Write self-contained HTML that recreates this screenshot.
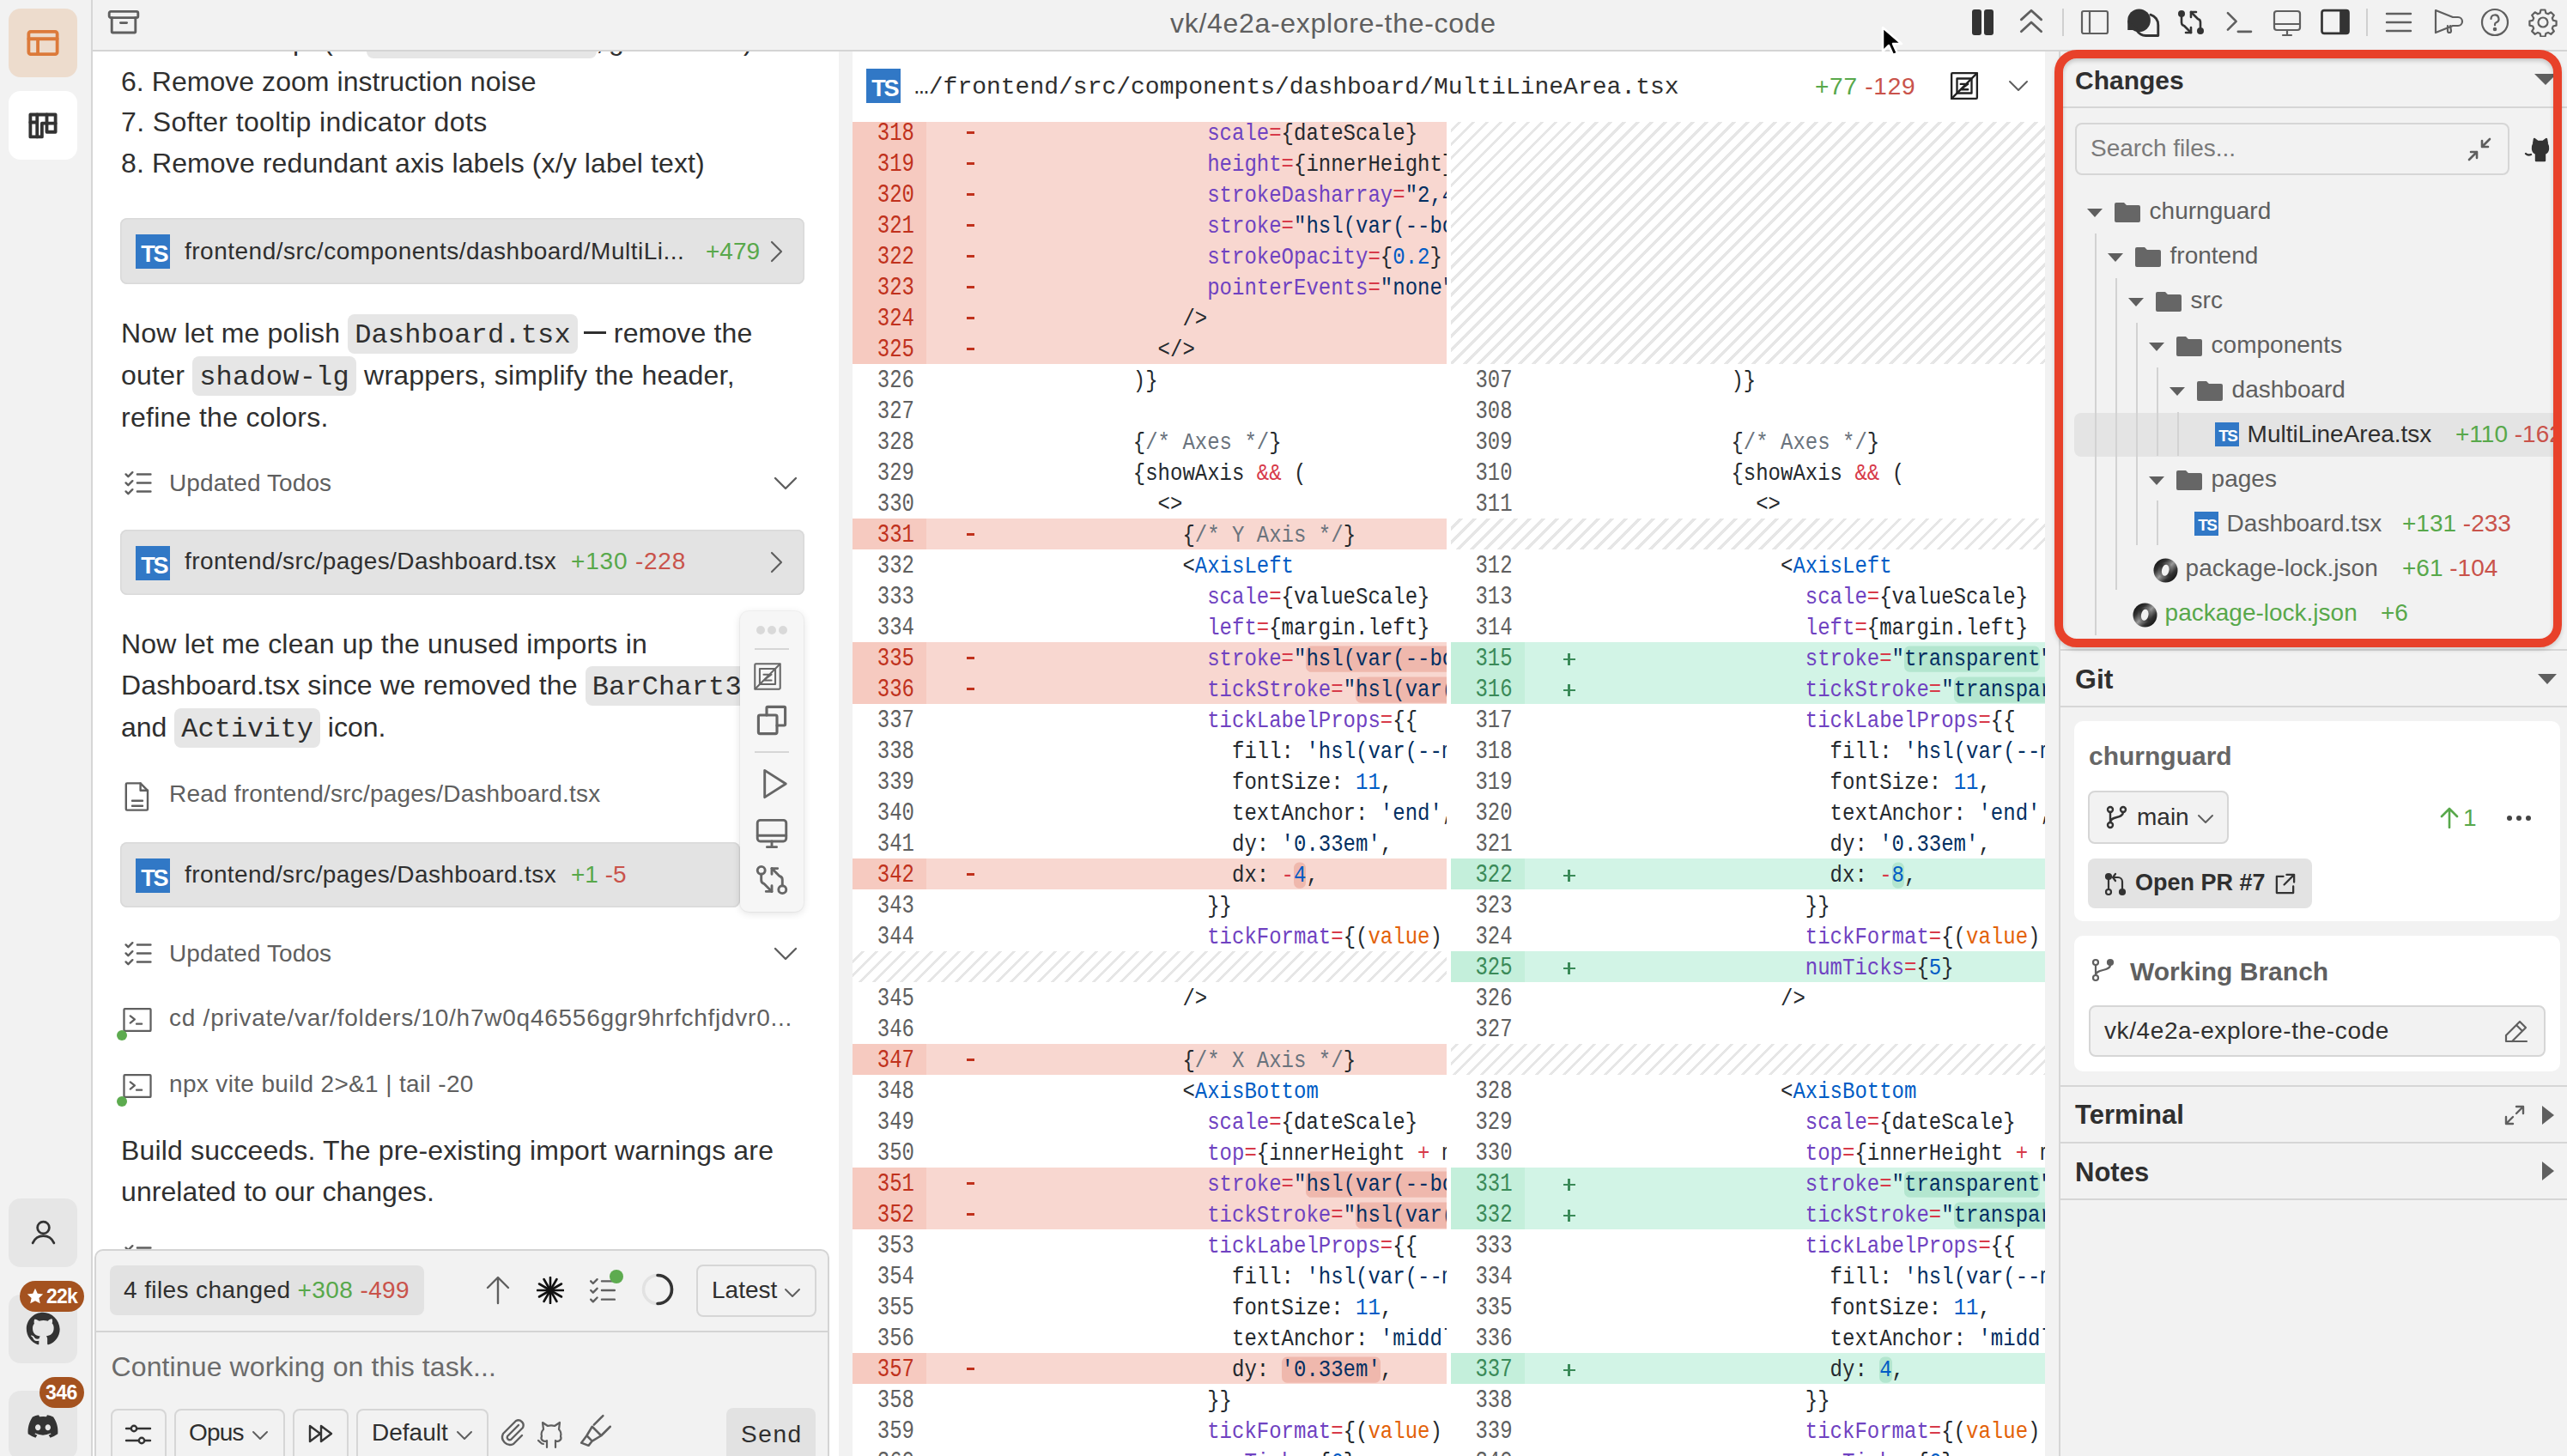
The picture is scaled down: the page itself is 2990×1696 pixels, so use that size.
<!DOCTYPE html>
<html><head><meta charset="utf-8">
<style>
html,body{margin:0;padding:0;}
body{width:2990px;height:1696px;overflow:hidden;position:relative;background:#f2f2f2;font-family:'Liberation Sans',sans-serif;}
.a{position:absolute;}
.t{white-space:pre;line-height:1;}
.s{font-family:'Liberation Sans',sans-serif;}
.m{font-family:'Liberation Mono',monospace;}
.ts{background:#3178c6;color:#fff;font-weight:700;text-align:center;font-family:'Liberation Sans',sans-serif;letter-spacing:-1px;line-height:1 !important;}
.code{font-family:'Liberation Mono',monospace;background:#e6e6e6;border-radius:8px;padding:6px 8px 3px 8px;}
.row{position:absolute;height:36px;overflow:hidden;}
.ln{position:absolute;top:0;height:36px;width:86px;}
.num{position:absolute;right:14px;top:9.4px;transform:scaleY(1.21);transform-origin:0 18.24px;font-family:'Liberation Mono',monospace;font-size:24px;line-height:24px;color:#5f5f5f;white-space:pre;}
.sg{position:absolute;top:9.1px;font-family:'Liberation Mono',monospace;font-size:24px;line-height:24px;white-space:pre;}
.cd{position:absolute;top:9.1px;transform:scaleY(1.12);transform-origin:0 18.24px;font-family:'Liberation Mono',monospace;font-size:24px;line-height:24px;white-space:pre;color:#24292e;}
.del{background:#f8d7d0;}
.del .ln{background:#f6cac0;}
.del .num,.del .sg{color:#c0311c;}
.add{background:#d2f4e6;}
.add .ln{background:#c4efdb;}
.add .num,.add .sg{color:#3a8a58;}
.hatch{background:repeating-linear-gradient(135deg,#e6e6e6 0 3px,#ffffff 3px 11.31px);background-attachment:fixed;}
.ka{color:#6f42c1}.ko{color:#d73a49}.ks{color:#032f62}.kn{color:#005cc5}.kt{color:#005cc5}.kc{color:#6a737d}.kv{color:#e36209}.kp{color:#24292e}
.hd{background:#efb8ad;border-radius:6px;}
.ha{background:#b3e6cf;border-radius:6px;}
</style></head><body>

<div class="a" style="left:106px;top:0px;width:2px;height:1696px;background:#d6d6d6;"></div>
<div class="a" style="left:10px;top:10px;width:80px;height:80px;background:#eddccd;border-radius:14px;"></div>
<svg class="a" style="left:31px;top:34px;" width="38" height="32" viewBox="0 0 32 26" fill="none" stroke="#dc7a3a" stroke-width="3.2" stroke-linecap="round" stroke-linejoin="round"><rect x="2" y="2" width="28" height="22" rx="2"/><path d="M2 9h28M11 9v15"/></svg>
<div class="a" style="left:10px;top:106px;width:80px;height:80px;background:#ffffff;border-radius:14px;"></div>
<svg class="a" style="left:32px;top:130px;" width="36" height="34" viewBox="0 0 32 30" fill="none" stroke="#333" stroke-width="3.4" stroke-linecap="round" stroke-linejoin="round"><path d="M3 3h26v18h-9v-9h-5v14H3z" /><path d="M10 3v23M20 3v9M3 11h7M20 12h9"/></svg>
<div class="a" style="left:10px;top:1396px;width:80px;height:80px;background:#e6e6e6;border-radius:14px;"></div>
<svg class="a" style="left:34px;top:1419px;" width="33" height="33" viewBox="0 0 24 24" fill="none" stroke="#333" stroke-width="2" stroke-linecap="round" stroke-linejoin="round"><circle cx="12" cy="8" r="5"/><path d="M3 21c1.8-4 5-6 9-6s7.2 2 9 6"/></svg>
<div class="a" style="left:10px;top:1508px;width:80px;height:80px;background:#e6e6e6;border-radius:14px;"></div>
<svg class="a" style="left:30px;top:1528px;" width="40" height="40" viewBox="0 0 24 24" fill="#333" stroke="none" stroke-width="0" stroke-linecap="round" stroke-linejoin="round"><path d="M12 .5C5.7.5.5 5.7.5 12c0 5.1 3.3 9.4 7.9 10.9.6.1.8-.2.8-.6v-2c-3.2.7-3.9-1.4-3.9-1.4-.5-1.3-1.3-1.7-1.3-1.7-1-.7.1-.7.1-.7 1.2.1 1.8 1.2 1.8 1.2 1 1.8 2.8 1.3 3.5 1 .1-.8.4-1.3.7-1.6-2.6-.3-5.3-1.3-5.3-5.7 0-1.3.5-2.3 1.2-3.1-.1-.3-.5-1.5.1-3.1 0 0 1-.3 3.3 1.2a11.5 11.5 0 0 1 6 0C17.3 4.7 18.3 5 18.3 5c.7 1.6.2 2.8.1 3.1.8.8 1.2 1.9 1.2 3.1 0 4.4-2.7 5.4-5.3 5.7.4.4.8 1.1.8 2.2v3.3c0 .3.2.7.8.6 4.6-1.5 7.9-5.8 7.9-10.9C23.5 5.7 18.3.5 12 .5z"/></svg>
<div class="a" style="left:23px;top:1492px;width:75px;height:36px;border-radius:18px;background:#a4521f;"></div>
<svg class="a" style="left:30px;top:1499px;" width="22" height="22" viewBox="0 0 24 24" fill="#fff" stroke="none" stroke-width="0" stroke-linecap="round" stroke-linejoin="round"><path d="M12 2l3 6.5 7 .8-5.2 4.8 1.5 7L12 17.6 5.7 21.1l1.5-7L2 9.3l7-.8z"/></svg>
<div class="a t s" style="left:54px;top:1499.45px;font-size:23px;color:#ffffff;font-weight:700;letter-spacing:-0.8px;">22k</div>
<div class="a" style="left:10px;top:1620px;width:80px;height:80px;background:#e6e6e6;border-radius:14px;"></div>
<div class="a" style="left:46px;top:1604px;width:52px;height:36px;border-radius:18px;background:#a4521f;"></div>
<div class="a t s" style="left:53px;top:1611.45px;font-size:23px;color:#ffffff;font-weight:700;letter-spacing:-0.6px;">346</div>
<svg class="a" style="left:30px;top:1644px;" width="40" height="32" viewBox="0 0 24 22" fill="#333" stroke="none" stroke-width="0" stroke-linecap="round" stroke-linejoin="round"><path d="M20.3 4.4A19.8 19.8 0 0 0 15.4 3l-.6 1.3a18.3 18.3 0 0 0-5.5 0L8.6 3a19.7 19.7 0 0 0-4.9 1.5C.6 9.1-.3 13.6.1 18.1a20 20 0 0 0 6 3l1.3-2.1c-.7-.3-1.4-.6-2-1l.5-.4a14.1 14.1 0 0 0 12.2 0l.5.4c-.6.4-1.3.7-2 1l1.3 2.1a19.9 19.9 0 0 0 6-3c.5-5.2-.9-9.7-3.6-13.7zM8 15.3c-1.2 0-2.2-1.1-2.2-2.4S6.8 10.5 8 10.5s2.2 1.1 2.2 2.4-1 2.4-2.2 2.4zm8 0c-1.2 0-2.2-1.1-2.2-2.4s1-2.4 2.2-2.4 2.2 1.1 2.2 2.4-1 2.4-2.2 2.4z"/></svg>
<div class="a" style="left:108px;top:58px;width:2882px;height:2px;background:#d4d4d4;"></div>
<svg class="a" style="left:124px;top:11px;" width="40" height="30" viewBox="0 0 32 25" fill="none" stroke="#5f5f5f" stroke-width="2.4" stroke-linecap="round" stroke-linejoin="round"><rect x="2" y="2" width="28" height="6" rx="1.5"/><path d="M4.5 8v13.5a1 1 0 0 0 1 1h21a1 1 0 0 0 1-1V8M13 13h6"/></svg>
<div class="a t s" style="left:1363px;top:10.80px;font-size:32px;color:#5f5f5f;letter-spacing:0.7px;">vk/4e2a-explore-the-code</div>
<div class="a" style="left:2297px;top:11px;width:11px;height:30px;background:#333;border-radius:3px;"></div>
<div class="a" style="left:2311px;top:11px;width:11px;height:30px;background:#333;border-radius:3px;"></div>
<svg class="a" style="left:2349px;top:9px;" width="34" height="32" viewBox="0 0 32 30" fill="none" stroke="#5f5f5f" stroke-width="2.6" stroke-linecap="round" stroke-linejoin="round"><path d="M5 13l11-10 11 10M5 26l11-10 11 10"/></svg>
<div class="a" style="left:2402px;top:10px;width:2px;height:32px;background:#d0d0d0;"></div>
<svg class="a" style="left:2422px;top:10px;" width="36" height="32" viewBox="0 0 34 32" fill="none" stroke="#5f5f5f" stroke-width="2.2" stroke-linecap="round" stroke-linejoin="round"><rect x="2" y="3" width="30" height="26" rx="2"/><path d="M11 3v26"/></svg>
<svg class="a" style="left:2476px;top:8px;" width="40" height="36" viewBox="0 0 36 32" fill="none" stroke="#333" stroke-width="2.6" stroke-linecap="round" stroke-linejoin="round"><circle cx="14" cy="14" r="12" fill="#333" stroke="none"/><path d="M2 14v10h12" fill="#333" stroke="none"/><path d="M12 25a11 11 0 0 0 9 5h13V19a11 11 0 0 0-8-11" stroke="#333" sw="2.5"/></svg>
<svg class="a" style="left:2533px;top:10px;" width="38" height="32" viewBox="0 0 34 32" fill="none" stroke="#333" stroke-width="2.6" stroke-linecap="round" stroke-linejoin="round"><circle cx="6" cy="6" r="4" fill="#333" stroke="none"/><circle cx="28" cy="26" r="4" fill="#333" stroke="none"/><path d="M6 10v6a4 4 0 0 0 3 4l8 8"/><path d="M17 22v6h-6"/><path d="M28 22v-6a4 4 0 0 0-3-4L17 4"/><path d="M17 10V4h6"/></svg>
<svg class="a" style="left:2592px;top:13px;" width="34" height="26" viewBox="0 0 30 24" fill="none" stroke="#5f5f5f" stroke-width="2.4" stroke-linecap="round" stroke-linejoin="round"><path d="M2 2l9 9-9 9M13 22h14"/></svg>
<svg class="a" style="left:2646px;top:11px;" width="36" height="32" viewBox="0 0 34 32" fill="none" stroke="#5f5f5f" stroke-width="2.2" stroke-linecap="round" stroke-linejoin="round"><rect x="2" y="2" width="30" height="22" rx="3"/><path d="M2 17h30M12 30h10M17 24v6"/></svg>
<svg class="a" style="left:2702px;top:10px;" width="36" height="31" viewBox="0 0 34 30" fill="none" stroke="#333" stroke-width="2.6" stroke-linecap="round" stroke-linejoin="round"><rect x="2" y="2" width="30" height="26" rx="2.5" stroke="#333"/><path d="M22 2h8a2 2 0 0 1 2 2v22a2 2 0 0 1-2 2h-8z" fill="#333" stroke="none"/></svg>
<div class="a" style="left:2756px;top:10px;width:2px;height:32px;background:#d0d0d0;"></div>
<svg class="a" style="left:2777px;top:13px;" width="34" height="26" viewBox="0 0 32 26" fill="none" stroke="#5f5f5f" stroke-width="2.4" stroke-linecap="round" stroke-linejoin="round"><path d="M2 3h28M2 13h28M2 23h28"/></svg>
<svg class="a" style="left:2833px;top:9px;" width="38" height="34" viewBox="0 0 36 34" fill="none" stroke="#5f5f5f" stroke-width="2.2" stroke-linecap="round" stroke-linejoin="round"><path d="M3 3l20 8h6a5 5 0 0 1 0 10h-6L3 29z"/><path d="M20 21l1 6a2 2 0 0 1-4 0v-6"/></svg>
<svg class="a" style="left:2888px;top:9px;" width="36" height="34" viewBox="0 0 34 34" fill="none" stroke="#5f5f5f" stroke-width="2.2" stroke-linecap="round" stroke-linejoin="round"><circle cx="17" cy="17" r="15"/><path d="M12.5 13a4.5 4.5 0 1 1 6 4.2c-1 .4-1.5 1.2-1.5 2.3v.8"/><circle cx="17" cy="25" r="1.2" fill="#5f5f5f"/></svg>
<svg class="a" style="left:2944px;top:9px;" width="36" height="34" viewBox="0 0 34 34" fill="none" stroke="#5f5f5f" stroke-width="2.2" stroke-linecap="round" stroke-linejoin="round"><path d="M14.5 2.5h5l.9 3.7 2.6 1.1 3.3-2 3.5 3.5-2 3.3 1.1 2.6 3.7.9v5l-3.7.9-1.1 2.6 2 3.3-3.5 3.5-3.3-2-2.6 1.1-.9 3.7h-5l-.9-3.7-2.6-1.1-3.3 2-3.5-3.5 2-3.3-1.1-2.6-3.7-.9v-5l3.7-.9 1.1-2.6-2-3.3 3.5-3.5 3.3 2 2.6-1.1z"/><circle cx="17" cy="17" r="5.5"/></svg>
<div class="a" id="chat" style="left:108px;top:60px;width:869px;height:1636px;background:#fff;overflow:hidden;">
<div class="a" style="left:-108px;top:-60px;width:2990px;height:1696px;">
<div class="a" style="left:427px;top:40px;width:268px;height:28px;background:#e6e6e6;border-radius:8px;"></div>
<div class="a t s" style="left:341px;top:30.80px;font-size:32px;color:#2f2f2f;">p</div>
<div class="a t s" style="left:377px;top:30.80px;font-size:32px;color:#2f2f2f;">(</div>
<div class="a t s" style="left:694px;top:30.80px;font-size:32px;color:#2f2f2f;">,</div>
<div class="a t s" style="left:709px;top:30.80px;font-size:32px;color:#2f2f2f;">g</div>
<div class="a t s" style="left:866px;top:30.80px;font-size:32px;color:#2f2f2f;">)</div>
<div class="a t s" style="left:141px;top:78.80px;font-size:32px;color:#2f2f2f;letter-spacing:0.05px;">6. Remove zoom instruction noise</div>
<div class="a t s" style="left:141px;top:126.40px;font-size:32px;color:#2f2f2f;letter-spacing:0.38px;">7. Softer tooltip indicator dots</div>
<div class="a t s" style="left:141px;top:174.00px;font-size:32px;color:#2f2f2f;letter-spacing:0.12px;">8. Remove redundant axis labels (x/y label text)</div>
<div class="a" style="left:140px;top:254px;width:797px;height:77px;background:#e3e3e3;border-radius:8px;box-shadow:inset 0 0 0 1.5px #d9d9d9;"></div>
<div class="a" style="left:158px;top:273px;width:40px;height:40px;background:#3178c6;overflow:hidden;"><div class="a t s" style="left:6.20px;top:10.35px;font-size:27.00px;font-weight:700;color:#fff;letter-spacing:-2.20px;">TS</div></div>
<div class="a t s" style="left:215px;top:278.70px;font-size:28px;color:#2f2f2f;letter-spacing:0.45px;"></div>
<div class="a t s" style="left:215px;top:278.70px;font-size:28px;color:#2f2f2f;letter-spacing:0.5px;">frontend/src/components/dashboard/MultiLi...</div>
<div class="a t s" style="left:822px;top:278.70px;font-size:28px;color:#58a84b;">+479</div>
<svg class="a" style="left:897px;top:278px;" width="16" height="30" viewBox="0 0 16 28" fill="none" stroke="#5f5f5f" stroke-width="2.2" stroke-linecap="round" stroke-linejoin="round"><path d="M2 3l11 11L2 25"/></svg>
<div class="a t s" style="left:141px;top:371.55px;font-size:32px;color:#2f2f2f;letter-spacing:0.15px;">Now let me polish <span class="code">Dashboard.tsx</span> <span style="display:inline-block;width:26px;height:2.6px;background:#2f2f2f;vertical-align:10px;margin-left:-2px"></span> remove the</div>
<div class="a t s" style="left:141px;top:421.30px;font-size:32px;color:#2f2f2f;letter-spacing:0.22px;">outer <span class="code">shadow-lg</span> wrappers, simplify the header,</div>
<div class="a t s" style="left:141px;top:470.30px;font-size:32px;color:#2f2f2f;letter-spacing:0.28px;">refine the colors.</div>
<svg class="a" style="left:143px;top:547.5px;" width="36" height="30" viewBox="0 0 30 27" fill="none" stroke="#5f5f5f" stroke-width="2.2" stroke-linecap="round" stroke-linejoin="round"><path d="M2 4l2.5 2.5L9 2M2 13l2.5 2.5L9 11M2 22l2.5 2.5L9 20M14 4h14M14 13h14M14 22h14"/></svg>
<div class="a t s" style="left:197px;top:548.70px;font-size:28px;color:#5f5f5f;letter-spacing:0.1px;">Updated Todos</div>
<svg class="a" style="left:900px;top:552.5px;" width="30" height="20" viewBox="0 0 30 20" fill="none" stroke="#5f5f5f" stroke-width="2.4" stroke-linecap="round" stroke-linejoin="round"><path d="M3 4l12 12L27 4"/></svg>
<div class="a" style="left:140px;top:617px;width:797px;height:76px;background:#e3e3e3;border-radius:8px;box-shadow:inset 0 0 0 1.5px #d9d9d9;"></div>
<div class="a" style="left:158px;top:636px;width:40px;height:40px;background:#3178c6;overflow:hidden;"><div class="a t s" style="left:6.20px;top:10.35px;font-size:27.00px;font-weight:700;color:#fff;letter-spacing:-2.20px;">TS</div></div>
<div class="a t s" style="left:215px;top:641.70px;font-size:28px;color:#2f2f2f;letter-spacing:0.45px;"></div>
<div class="a t s" style="left:215px;top:640.20px;font-size:28px;color:#2f2f2f;letter-spacing:0.4px;">frontend/src/pages/Dashboard.tsx</div>
<div class="a t s" style="left:665px;top:640.20px;font-size:28px;color:#2f2f2f;letter-spacing:0.8px;"><span style="color:#58a84b">+130</span> <span style="color:#c9534b">-228</span></div>
<svg class="a" style="left:897px;top:640px;" width="16" height="30" viewBox="0 0 16 28" fill="none" stroke="#5f5f5f" stroke-width="2.2" stroke-linecap="round" stroke-linejoin="round"><path d="M2 3l11 11L2 25"/></svg>
<div class="a t s" style="left:141px;top:734.05px;font-size:32px;color:#2f2f2f;letter-spacing:0.2px;">Now let me clean up the unused imports in</div>
<div class="a t s" style="left:141px;top:782.30px;font-size:32px;color:#2f2f2f;letter-spacing:0.15px;">Dashboard.tsx since we removed the <span class="code">BarChart3</span></div>
<div class="a t s" style="left:141px;top:830.80px;font-size:32px;color:#2f2f2f;">and <span class="code">Activity</span> icon.</div>
<svg class="a" style="left:143px;top:910px;" width="34" height="36" viewBox="0 0 28 30" fill="none" stroke="#5f5f5f" stroke-width="2" stroke-linecap="round" stroke-linejoin="round"><path d="M4 2h13l7 7v18a1 1 0 0 1-1 1H4a1 1 0 0 1-1-1V3a1 1 0 0 1 1-1z"/><path d="M17 2v7h7M9 19h10M9 24h10"/></svg>
<div class="a t s" style="left:197px;top:911.20px;font-size:28px;color:#5f5f5f;letter-spacing:0.2px;">Read frontend/src/pages/Dashboard.tsx</div>
<div class="a" style="left:140px;top:980.5px;width:722px;height:76.5px;background:#e3e3e3;border-radius:8px;box-shadow:inset 0 0 0 1.5px #d9d9d9;"></div>
<div class="a" style="left:158px;top:999.5px;width:40px;height:40px;background:#3178c6;overflow:hidden;"><div class="a t s" style="left:6.20px;top:10.35px;font-size:27.00px;font-weight:700;color:#fff;letter-spacing:-2.20px;">TS</div></div>
<div class="a t s" style="left:215px;top:1005.20px;font-size:28px;color:#2f2f2f;letter-spacing:0.45px;"></div>
<div class="a t s" style="left:215px;top:1004.70px;font-size:28px;color:#2f2f2f;letter-spacing:0.4px;">frontend/src/pages/Dashboard.tsx</div>
<div class="a t s" style="left:665px;top:1004.70px;font-size:28px;color:#2f2f2f;"><span style="color:#58a84b">+1</span> <span style="color:#c9534b">-5</span></div>
<svg class="a" style="left:143px;top:1095.5px;" width="36" height="30" viewBox="0 0 30 27" fill="none" stroke="#5f5f5f" stroke-width="2.2" stroke-linecap="round" stroke-linejoin="round"><path d="M2 4l2.5 2.5L9 2M2 13l2.5 2.5L9 11M2 22l2.5 2.5L9 20M14 4h14M14 13h14M14 22h14"/></svg>
<div class="a t s" style="left:197px;top:1096.70px;font-size:28px;color:#5f5f5f;letter-spacing:0.1px;">Updated Todos</div>
<svg class="a" style="left:900px;top:1100.5px;" width="30" height="20" viewBox="0 0 30 20" fill="none" stroke="#5f5f5f" stroke-width="2.4" stroke-linecap="round" stroke-linejoin="round"><path d="M3 4l12 12L27 4"/></svg>
<svg class="a" style="left:142px;top:1172.5px;" width="36" height="30" viewBox="0 0 34 29" fill="none" stroke="#5f5f5f" stroke-width="2.2" stroke-linecap="round" stroke-linejoin="round"><rect x="2" y="2" width="30" height="25" rx="1"/><path d="M9 10l5 4-5 4M16 19h6"/></svg>
<div class="a" style="left:136px;top:1200.0px;width:12px;height:12px;border-radius:6px;background:#5dab4f;"></div>
<div class="a t s" style="left:197px;top:1171.70px;font-size:28px;color:#5f5f5f;letter-spacing:0.75px;">cd /private/var/folders/10/h7w0q46556ggr9hrfchfjdvr0...</div>
<svg class="a" style="left:142px;top:1249.5px;" width="36" height="30" viewBox="0 0 34 29" fill="none" stroke="#5f5f5f" stroke-width="2.2" stroke-linecap="round" stroke-linejoin="round"><rect x="2" y="2" width="30" height="25" rx="1"/><path d="M9 10l5 4-5 4M16 19h6"/></svg>
<div class="a" style="left:136px;top:1277.0px;width:12px;height:12px;border-radius:6px;background:#5dab4f;"></div>
<div class="a t s" style="left:197px;top:1248.70px;font-size:28px;color:#5f5f5f;letter-spacing:0.35px;">npx vite build 2&gt;&amp;1 | tail -20</div>
<div class="a t s" style="left:141px;top:1324.05px;font-size:32px;color:#2f2f2f;letter-spacing:0.16px;">Build succeeds. The pre-existing import warnings are</div>
<div class="a t s" style="left:141px;top:1371.55px;font-size:32px;color:#2f2f2f;letter-spacing:0.08px;">unrelated to our changes.</div>
<svg class="a" style="left:143px;top:1449px;" width="36" height="30" viewBox="0 0 30 27" fill="none" stroke="#5f5f5f" stroke-width="2.2" stroke-linecap="round" stroke-linejoin="round"><path d="M2 4l2.5 2.5L9 2M14 4h14M14 13h14"/></svg>
<div class="a" style="left:862px;top:712px;width:74px;height:350px;background:#f6f6f6;border-radius:10px;box-shadow:0 2px 10px rgba(0,0,0,0.12), 0 0 0 1px rgba(0,0,0,0.03);"></div>
<div class="a" style="left:881px;top:729px;width:10px;height:10px;border-radius:5px;background:#d9d9d9;"></div>
<div class="a" style="left:894px;top:729px;width:10px;height:10px;border-radius:5px;background:#d9d9d9;"></div>
<div class="a" style="left:907px;top:729px;width:10px;height:10px;border-radius:5px;background:#d9d9d9;"></div>
<div class="a" style="left:879px;top:754.5px;width:40px;height:2px;background:#d6d6d6;"></div>
<svg class="a" style="left:877px;top:771px;" width="34" height="34" viewBox="0 0 30 30" fill="none" stroke="#666" stroke-width="1.8" stroke-linecap="round" stroke-linejoin="round"><rect x="2" y="2" width="26" height="26" rx="1"/><rect x="7" y="7" width="16" height="16"/><path d="M2 28L28 2M11 13h8l-8 6h8"/></svg>
<svg class="a" style="left:881px;top:821px;" width="36" height="36" viewBox="0 0 30 30" fill="none" stroke="#666" stroke-width="2.6" stroke-linecap="round" stroke-linejoin="round"><rect x="2" y="10" width="18" height="18" rx="1.5"/><path d="M10 10V3a1 1 0 0 1 1-1h16a1 1 0 0 1 1 1v16a1 1 0 0 1-1 1h-7"/></svg>
<div class="a" style="left:879px;top:874.5px;width:40px;height:2px;background:#d6d6d6;"></div>
<svg class="a" style="left:885px;top:894px;" width="36" height="38" viewBox="0 0 30 34" fill="none" stroke="#666" stroke-width="2.6" stroke-linecap="round" stroke-linejoin="round"><path d="M4 3l22 14L4 31z"/></svg>
<svg class="a" style="left:880px;top:953px;" width="38" height="36" viewBox="0 0 34 32" fill="none" stroke="#666" stroke-width="2.6" stroke-linecap="round" stroke-linejoin="round"><rect x="2" y="2" width="30" height="22" rx="3"/><path d="M2 18h30M12 30h10M17 24v6"/></svg>
<svg class="a" style="left:880px;top:1007px;" width="38" height="36" viewBox="0 0 34 32" fill="none" stroke="#666" stroke-width="2.6" stroke-linecap="round" stroke-linejoin="round"><circle cx="6" cy="6" r="4"/><circle cx="28" cy="26" r="4"/><path d="M6 10v6a4 4 0 0 0 3 4l8 8"/><path d="M17 22v6h-6"/><path d="M28 22v-6a4 4 0 0 0-3-4L17 4"/><path d="M17 10V4h6"/></svg>
<div class="a" style="left:110px;top:1454.5px;width:856px;height:260px;background:#f2f2f2;border:2px solid #d4d4d4;border-radius:10px;box-sizing:border-box;"></div>
<div class="a" style="left:128px;top:1474px;width:366px;height:58px;background:#e2e2e2;border-radius:8px;"></div>
<div class="a t s" style="left:144px;top:1489.20px;font-size:28px;color:#2f2f2f;letter-spacing:0.4px;">4 files changed <span style="color:#58a84b">+308</span> <span style="color:#c9534b">-499</span></div>
<svg class="a" style="left:565px;top:1486px;" width="30" height="34" viewBox="0 0 30 34" fill="none" stroke="#5f5f5f" stroke-width="2.4" stroke-linecap="round" stroke-linejoin="round"><path d="M15 32V3M3 14L15 2l12 12"/></svg>
<svg class="a" style="left:625px;top:1487px;" width="32" height="32" viewBox="0 0 32 32" fill="none" stroke="#111" stroke-width="2.6" stroke-linecap="round" stroke-linejoin="round"><circle cx="16" cy="16" r="4" fill="#111" stroke="none"/><line x1="16" y1="16" x2="31.00" y2="16.00"/><line x1="16" y1="16" x2="28.99" y2="23.50"/><line x1="16" y1="16" x2="23.50" y2="28.99"/><line x1="16" y1="16" x2="16.00" y2="31.00"/><line x1="16" y1="16" x2="8.50" y2="28.99"/><line x1="16" y1="16" x2="3.01" y2="23.50"/><line x1="16" y1="16" x2="1.00" y2="16.00"/><line x1="16" y1="16" x2="3.01" y2="8.50"/><line x1="16" y1="16" x2="8.50" y2="3.01"/><line x1="16" y1="16" x2="16.00" y2="1.00"/><line x1="16" y1="16" x2="23.50" y2="3.01"/><line x1="16" y1="16" x2="28.99" y2="8.50"/></svg>
<svg class="a" style="left:685px;top:1487px;" width="34" height="32" viewBox="0 0 30 30" fill="none" stroke="#5f5f5f" stroke-width="2.2" stroke-linecap="round" stroke-linejoin="round"><path d="M2 5l2.5 2.5L9 3M2 15l2.5 2.5L9 13M2 25l2.5 2.5L9 23M14 5h14M14 15h14M14 25h14"/></svg>
<div class="a" style="left:710px;top:1479px;width:16px;height:16px;border-radius:8px;background:#5dab4f;"></div>
<svg class="a" style="left:746px;top:1482px;" width="40" height="40" viewBox="0 0 40 40" fill="none" stroke="#333" stroke-width="3.6" stroke-linecap="round" stroke-linejoin="round"><circle cx="20" cy="20" r="16.5" stroke="#e2e2e2"/><path d="M20 3.5A16.5 16.5 0 0 1 20 36.5" stroke="#333"/></svg>
<div class="a" style="left:810.5px;top:1472.5px;width:140px;height:61px;border:2px solid #d6d6d6;border-radius:8px;box-sizing:border-box;"></div>
<div class="a t s" style="left:829px;top:1489.20px;font-size:28px;color:#2f2f2f;">Latest</div>
<svg class="a" style="left:913px;top:1500px;" width="20" height="14" viewBox="0 0 20 14" fill="none" stroke="#5f5f5f" stroke-width="2" stroke-linecap="round" stroke-linejoin="round"><path d="M2 2l8 8 8-8"/></svg>
<div class="a" style="left:112px;top:1550px;width:852px;height:2px;background:#d4d4d4;"></div>
<div class="a t s" style="left:129.5px;top:1576.30px;font-size:32px;color:#6b6b6b;letter-spacing:0.12px;">Continue working on this task...</div>
<div class="a" style="left:128.5px;top:1641px;width:65px;height:70px;border:2px solid #d6d6d6;border-radius:8px;box-sizing:border-box;"></div>
<svg class="a" style="left:145px;top:1658px;" width="32" height="26" viewBox="0 0 32 26" fill="none" stroke="#333" stroke-width="2.4" stroke-linecap="round" stroke-linejoin="round"><path d="M2 6h28M2 20h28"/><circle cx="11" cy="6" r="3.2" fill="#f2f2f2"/><circle cx="20" cy="20" r="3.2" fill="#f2f2f2"/></svg>
<div class="a" style="left:202.5px;top:1641px;width:129px;height:70px;border:2px solid #d6d6d6;border-radius:8px;box-sizing:border-box;"></div>
<div class="a t s" style="left:220px;top:1654.70px;font-size:28px;color:#2f2f2f;letter-spacing:-0.8px;">Opus</div>
<svg class="a" style="left:293px;top:1666px;" width="20" height="14" viewBox="0 0 20 14" fill="none" stroke="#5f5f5f" stroke-width="2" stroke-linecap="round" stroke-linejoin="round"><path d="M2 2l8 8 8-8"/></svg>
<div class="a" style="left:340.5px;top:1641px;width:65px;height:70px;border:2px solid #d6d6d6;border-radius:8px;box-sizing:border-box;"></div>
<svg class="a" style="left:359px;top:1659px;" width="30" height="22" viewBox="0 0 30 22" fill="none" stroke="#333" stroke-width="2.4" stroke-linecap="round" stroke-linejoin="round"><path d="M2 2l12 9-12 9zM15 2l12 9-12 9z"/></svg>
<div class="a" style="left:414.5px;top:1641px;width:154px;height:70px;border:2px solid #d6d6d6;border-radius:8px;box-sizing:border-box;"></div>
<div class="a t s" style="left:433px;top:1654.70px;font-size:28px;color:#2f2f2f;">Default</div>
<svg class="a" style="left:531px;top:1666px;" width="20" height="14" viewBox="0 0 20 14" fill="none" stroke="#5f5f5f" stroke-width="2" stroke-linecap="round" stroke-linejoin="round"><path d="M2 2l8 8 8-8"/></svg>
<svg class="a" style="left:580px;top:1651px;" width="34" height="36" viewBox="0 0 34 36" fill="none" stroke="#5f5f5f" stroke-width="2.4" stroke-linecap="round" stroke-linejoin="round"><path d="M24 9L11 22a3 3 0 0 0 4 4L29 12a6 6 0 0 0-8-8L6 19a9 9 0 0 0 12 12l10-10"/></svg>
<svg class="a" style="left:624px;top:1650px;" width="38" height="38" viewBox="0 0 36 38" fill="none" stroke="#5f5f5f" stroke-width="2.2" stroke-linecap="round" stroke-linejoin="round"><path d="M8 32c-3 0-4-3-6-4M12 36v-8a4 4 0 0 1-6-5 8 8 0 0 1 2-8l-1-8 6 4a14 14 0 0 1 8 0l6-4-1 8a8 8 0 0 1 2 8 4 4 0 0 1-6 5v8"/></svg>
<svg class="a" style="left:674px;top:1647px;" width="42" height="40" viewBox="0 0 38 38" fill="none" stroke="#5f5f5f" stroke-width="2.4" stroke-linecap="round" stroke-linejoin="round"><path d="M16 12L26 2M8 24l6-10 10 10-10 6zM8 24l-6 8 8 3 4-5M24 24l10-10"/></svg>
<div class="a" style="left:846px;top:1640px;width:104px;height:70px;background:#e2e2e2;border-radius:8px;"></div>
<div class="a t s" style="left:863px;top:1656.70px;font-size:28px;color:#2f2f2f;letter-spacing:1.6px;">Send</div>
</div></div>
<div class="a" style="left:993px;top:60px;width:1389px;height:1636px;background:#ffffff;"></div>
<div class="row del" style="left:993px;top:135.75px;width:692px;">
<div class="ln"><div class="num">318</div></div>
<div class="a" style="left:132.7px;top:17.3px;width:9.5px;height:2.8px;background:#c0311c;"></div>
<div class="cd" style="left:413.2px"><span class="ka">scale</span><span class="ko">=</span><span class="kp">{dateScale}</span></div>
</div>
<div class="row del" style="left:993px;top:171.75px;width:692px;">
<div class="ln"><div class="num">319</div></div>
<div class="a" style="left:132.7px;top:17.3px;width:9.5px;height:2.8px;background:#c0311c;"></div>
<div class="cd" style="left:413.2px"><span class="ka">height</span><span class="ko">=</span><span class="kp">{innerHeight}</span></div>
</div>
<div class="row del" style="left:993px;top:207.75px;width:692px;">
<div class="ln"><div class="num">320</div></div>
<div class="a" style="left:132.7px;top:17.3px;width:9.5px;height:2.8px;background:#c0311c;"></div>
<div class="cd" style="left:413.2px"><span class="ka">strokeDasharray</span><span class="ko">=</span><span class="ks">&quot;2,4&quot;</span></div>
</div>
<div class="row del" style="left:993px;top:243.75px;width:692px;">
<div class="ln"><div class="num">321</div></div>
<div class="a" style="left:132.7px;top:17.3px;width:9.5px;height:2.8px;background:#c0311c;"></div>
<div class="cd" style="left:413.2px"><span class="ka">stroke</span><span class="ko">=</span><span class="ks">&quot;hsl(var(--border))&quot;</span></div>
</div>
<div class="row del" style="left:993px;top:279.75px;width:692px;">
<div class="ln"><div class="num">322</div></div>
<div class="a" style="left:132.7px;top:17.3px;width:9.5px;height:2.8px;background:#c0311c;"></div>
<div class="cd" style="left:413.2px"><span class="ka">strokeOpacity</span><span class="ko">=</span><span class="kp">{</span><span class="kn">0.2</span><span class="kp">}</span></div>
</div>
<div class="row del" style="left:993px;top:315.75px;width:692px;">
<div class="ln"><div class="num">323</div></div>
<div class="a" style="left:132.7px;top:17.3px;width:9.5px;height:2.8px;background:#c0311c;"></div>
<div class="cd" style="left:413.2px"><span class="ka">pointerEvents</span><span class="ko">=</span><span class="ks">&quot;none&quot;</span></div>
</div>
<div class="row del" style="left:993px;top:351.75px;width:692px;">
<div class="ln"><div class="num">324</div></div>
<div class="a" style="left:132.7px;top:17.3px;width:9.5px;height:2.8px;background:#c0311c;"></div>
<div class="cd" style="left:384.4px"><span class="kp">/&gt;</span></div>
</div>
<div class="row del" style="left:993px;top:387.75px;width:692px;">
<div class="ln"><div class="num">325</div></div>
<div class="a" style="left:132.7px;top:17.3px;width:9.5px;height:2.8px;background:#c0311c;"></div>
<div class="cd" style="left:355.6px"><span class="kp">&lt;/&gt;</span></div>
</div>
<div class="row " style="left:993px;top:423.75px;width:692px;">
<div class="ln"><div class="num">326</div></div>
<div class="cd" style="left:326.8px"><span class="kp">)}</span></div>
</div>
<div class="row " style="left:993px;top:459.75px;width:692px;">
<div class="ln"><div class="num">327</div></div>
</div>
<div class="row " style="left:993px;top:495.75px;width:692px;">
<div class="ln"><div class="num">328</div></div>
<div class="cd" style="left:326.8px"><span class="kp">{</span><span class="kc">/* Axes */</span><span class="kp">}</span></div>
</div>
<div class="row " style="left:993px;top:531.75px;width:692px;">
<div class="ln"><div class="num">329</div></div>
<div class="cd" style="left:326.8px"><span class="kp">{showAxis </span><span class="ko">&amp;&amp;</span><span class="kp"> (</span></div>
</div>
<div class="row " style="left:993px;top:567.75px;width:692px;">
<div class="ln"><div class="num">330</div></div>
<div class="cd" style="left:355.6px"><span class="kp">&lt;&gt;</span></div>
</div>
<div class="row del" style="left:993px;top:603.75px;width:692px;">
<div class="ln"><div class="num">331</div></div>
<div class="a" style="left:132.7px;top:17.3px;width:9.5px;height:2.8px;background:#c0311c;"></div>
<div class="cd" style="left:384.4px"><span class="kp">{</span><span class="kc">/* Y Axis */</span><span class="kp">}</span></div>
</div>
<div class="row " style="left:993px;top:639.75px;width:692px;">
<div class="ln"><div class="num">332</div></div>
<div class="cd" style="left:384.4px"><span class="kp">&lt;</span><span class="kt">AxisLeft</span></div>
</div>
<div class="row " style="left:993px;top:675.75px;width:692px;">
<div class="ln"><div class="num">333</div></div>
<div class="cd" style="left:413.2px"><span class="ka">scale</span><span class="ko">=</span><span class="kp">{valueScale}</span></div>
</div>
<div class="row " style="left:993px;top:711.75px;width:692px;">
<div class="ln"><div class="num">334</div></div>
<div class="cd" style="left:413.2px"><span class="ka">left</span><span class="ko">=</span><span class="kp">{margin.left}</span></div>
</div>
<div class="row del" style="left:993px;top:747.75px;width:692px;">
<div class="ln"><div class="num">335</div></div>
<div class="a" style="left:132.7px;top:17.3px;width:9.5px;height:2.8px;background:#c0311c;"></div>
<div class="cd" style="left:413.2px"><span class="ka">stroke</span><span class="ko">=</span><span class="ks">&quot;</span><span class="hd ks">hsl(var(--border))</span></div>
</div>
<div class="row del" style="left:993px;top:783.75px;width:692px;">
<div class="ln"><div class="num">336</div></div>
<div class="a" style="left:132.7px;top:17.3px;width:9.5px;height:2.8px;background:#c0311c;"></div>
<div class="cd" style="left:413.2px"><span class="ka">tickStroke</span><span class="ko">=</span><span class="ks">&quot;</span><span class="hd ks">hsl(var(--border))</span></div>
</div>
<div class="row " style="left:993px;top:819.75px;width:692px;">
<div class="ln"><div class="num">337</div></div>
<div class="cd" style="left:413.2px"><span class="ka">tickLabelProps</span><span class="ko">=</span><span class="kp">{{</span></div>
</div>
<div class="row " style="left:993px;top:855.75px;width:692px;">
<div class="ln"><div class="num">338</div></div>
<div class="cd" style="left:442.0px"><span class="kp">fill: </span><span class="ks">&#x27;hsl(var(--muted-foreground))&#x27;</span></div>
</div>
<div class="row " style="left:993px;top:891.75px;width:692px;">
<div class="ln"><div class="num">339</div></div>
<div class="cd" style="left:442.0px"><span class="kp">fontSize: </span><span class="kn">11</span><span class="kp">,</span></div>
</div>
<div class="row " style="left:993px;top:927.75px;width:692px;">
<div class="ln"><div class="num">340</div></div>
<div class="cd" style="left:442.0px"><span class="kp">textAnchor: </span><span class="ks">&#x27;end&#x27;</span><span class="kp">,</span></div>
</div>
<div class="row " style="left:993px;top:963.75px;width:692px;">
<div class="ln"><div class="num">341</div></div>
<div class="cd" style="left:442.0px"><span class="kp">dy: </span><span class="ks">&#x27;0.33em&#x27;</span><span class="kp">,</span></div>
</div>
<div class="row del" style="left:993px;top:999.75px;width:692px;">
<div class="ln"><div class="num">342</div></div>
<div class="a" style="left:132.7px;top:17.3px;width:9.5px;height:2.8px;background:#c0311c;"></div>
<div class="cd" style="left:442.0px"><span class="kp">dx: </span><span class="ko">-</span><span class="hd kn">4</span><span class="kp">,</span></div>
</div>
<div class="row " style="left:993px;top:1035.75px;width:692px;">
<div class="ln"><div class="num">343</div></div>
<div class="cd" style="left:413.2px"><span class="kp">}}</span></div>
</div>
<div class="row " style="left:993px;top:1071.75px;width:692px;">
<div class="ln"><div class="num">344</div></div>
<div class="cd" style="left:413.2px"><span class="ka">tickFormat</span><span class="ko">=</span><span class="kp">{(</span><span class="kv">value</span><span class="kp">) =&gt; formatDate(value)}</span></div>
</div>
<div class="row hatch" style="left:993px;top:1107.75px;width:692px;">
</div>
<div class="row " style="left:993px;top:1143.75px;width:692px;">
<div class="ln"><div class="num">345</div></div>
<div class="cd" style="left:384.4px"><span class="kp">/&gt;</span></div>
</div>
<div class="row " style="left:993px;top:1179.75px;width:692px;">
<div class="ln"><div class="num">346</div></div>
</div>
<div class="row del" style="left:993px;top:1215.75px;width:692px;">
<div class="ln"><div class="num">347</div></div>
<div class="a" style="left:132.7px;top:17.3px;width:9.5px;height:2.8px;background:#c0311c;"></div>
<div class="cd" style="left:384.4px"><span class="kp">{</span><span class="kc">/* X Axis */</span><span class="kp">}</span></div>
</div>
<div class="row " style="left:993px;top:1251.75px;width:692px;">
<div class="ln"><div class="num">348</div></div>
<div class="cd" style="left:384.4px"><span class="kp">&lt;</span><span class="kt">AxisBottom</span></div>
</div>
<div class="row " style="left:993px;top:1287.75px;width:692px;">
<div class="ln"><div class="num">349</div></div>
<div class="cd" style="left:413.2px"><span class="ka">scale</span><span class="ko">=</span><span class="kp">{dateScale}</span></div>
</div>
<div class="row " style="left:993px;top:1323.75px;width:692px;">
<div class="ln"><div class="num">350</div></div>
<div class="cd" style="left:413.2px"><span class="ka">top</span><span class="ko">=</span><span class="kp">{innerHeight </span><span class="ko">+</span><span class="kp"> margin.top}</span></div>
</div>
<div class="row del" style="left:993px;top:1359.75px;width:692px;">
<div class="ln"><div class="num">351</div></div>
<div class="a" style="left:132.7px;top:17.3px;width:9.5px;height:2.8px;background:#c0311c;"></div>
<div class="cd" style="left:413.2px"><span class="ka">stroke</span><span class="ko">=</span><span class="ks">&quot;</span><span class="hd ks">hsl(var(--border))</span></div>
</div>
<div class="row del" style="left:993px;top:1395.75px;width:692px;">
<div class="ln"><div class="num">352</div></div>
<div class="a" style="left:132.7px;top:17.3px;width:9.5px;height:2.8px;background:#c0311c;"></div>
<div class="cd" style="left:413.2px"><span class="ka">tickStroke</span><span class="ko">=</span><span class="ks">&quot;</span><span class="hd ks">hsl(var(--border))</span></div>
</div>
<div class="row " style="left:993px;top:1431.75px;width:692px;">
<div class="ln"><div class="num">353</div></div>
<div class="cd" style="left:413.2px"><span class="ka">tickLabelProps</span><span class="ko">=</span><span class="kp">{{</span></div>
</div>
<div class="row " style="left:993px;top:1467.75px;width:692px;">
<div class="ln"><div class="num">354</div></div>
<div class="cd" style="left:442.0px"><span class="kp">fill: </span><span class="ks">&#x27;hsl(var(--muted-foreground))&#x27;</span></div>
</div>
<div class="row " style="left:993px;top:1503.75px;width:692px;">
<div class="ln"><div class="num">355</div></div>
<div class="cd" style="left:442.0px"><span class="kp">fontSize: </span><span class="kn">11</span><span class="kp">,</span></div>
</div>
<div class="row " style="left:993px;top:1539.75px;width:692px;">
<div class="ln"><div class="num">356</div></div>
<div class="cd" style="left:442.0px"><span class="kp">textAnchor: </span><span class="ks">&#x27;middle&#x27;</span><span class="kp">,</span></div>
</div>
<div class="row del" style="left:993px;top:1575.75px;width:692px;">
<div class="ln"><div class="num">357</div></div>
<div class="a" style="left:132.7px;top:17.3px;width:9.5px;height:2.8px;background:#c0311c;"></div>
<div class="cd" style="left:442.0px"><span class="kp">dy: </span><span class="hd ks">&#x27;0.33em&#x27;</span><span class="kp">,</span></div>
</div>
<div class="row " style="left:993px;top:1611.75px;width:692px;">
<div class="ln"><div class="num">358</div></div>
<div class="cd" style="left:413.2px"><span class="kp">}}</span></div>
</div>
<div class="row " style="left:993px;top:1647.75px;width:692px;">
<div class="ln"><div class="num">359</div></div>
<div class="cd" style="left:413.2px"><span class="ka">tickFormat</span><span class="ko">=</span><span class="kp">{(</span><span class="kv">value</span><span class="kp">) =&gt; formatDate(value)}</span></div>
</div>
<div class="row " style="left:993px;top:1683.75px;width:692px;">
<div class="ln"><div class="num">360</div></div>
<div class="cd" style="left:413.2px"><span class="ka">numTicks</span><span class="ko">=</span><span class="kp">{</span><span class="kn">6</span><span class="kp">}</span></div>
</div>
<div class="row hatch" style="left:1689.6px;top:135.75px;width:692px;">
</div>
<div class="row hatch" style="left:1689.6px;top:171.75px;width:692px;">
</div>
<div class="row hatch" style="left:1689.6px;top:207.75px;width:692px;">
</div>
<div class="row hatch" style="left:1689.6px;top:243.75px;width:692px;">
</div>
<div class="row hatch" style="left:1689.6px;top:279.75px;width:692px;">
</div>
<div class="row hatch" style="left:1689.6px;top:315.75px;width:692px;">
</div>
<div class="row hatch" style="left:1689.6px;top:351.75px;width:692px;">
</div>
<div class="row hatch" style="left:1689.6px;top:387.75px;width:692px;">
</div>
<div class="row " style="left:1689.6px;top:423.75px;width:692px;">
<div class="ln"><div class="num">307</div></div>
<div class="cd" style="left:326.8px"><span class="kp">)}</span></div>
</div>
<div class="row " style="left:1689.6px;top:459.75px;width:692px;">
<div class="ln"><div class="num">308</div></div>
</div>
<div class="row " style="left:1689.6px;top:495.75px;width:692px;">
<div class="ln"><div class="num">309</div></div>
<div class="cd" style="left:326.8px"><span class="kp">{</span><span class="kc">/* Axes */</span><span class="kp">}</span></div>
</div>
<div class="row " style="left:1689.6px;top:531.75px;width:692px;">
<div class="ln"><div class="num">310</div></div>
<div class="cd" style="left:326.8px"><span class="kp">{showAxis </span><span class="ko">&amp;&amp;</span><span class="kp"> (</span></div>
</div>
<div class="row " style="left:1689.6px;top:567.75px;width:692px;">
<div class="ln"><div class="num">311</div></div>
<div class="cd" style="left:355.6px"><span class="kp">&lt;&gt;</span></div>
</div>
<div class="row hatch" style="left:1689.6px;top:603.75px;width:692px;">
</div>
<div class="row " style="left:1689.6px;top:639.75px;width:692px;">
<div class="ln"><div class="num">312</div></div>
<div class="cd" style="left:384.4px"><span class="kp">&lt;</span><span class="kt">AxisLeft</span></div>
</div>
<div class="row " style="left:1689.6px;top:675.75px;width:692px;">
<div class="ln"><div class="num">313</div></div>
<div class="cd" style="left:413.2px"><span class="ka">scale</span><span class="ko">=</span><span class="kp">{valueScale}</span></div>
</div>
<div class="row " style="left:1689.6px;top:711.75px;width:692px;">
<div class="ln"><div class="num">314</div></div>
<div class="cd" style="left:413.2px"><span class="ka">left</span><span class="ko">=</span><span class="kp">{margin.left}</span></div>
</div>
<div class="row add" style="left:1689.6px;top:747.75px;width:692px;">
<div class="ln"><div class="num">315</div></div>
<div class="a" style="left:131px;top:19px;width:14px;height:2.2px;background:#3a8a58;"></div><div class="a" style="left:136.9px;top:13.1px;width:2.2px;height:14px;background:#3a8a58;"></div>
<div class="cd" style="left:413.2px"><span class="ka">stroke</span><span class="ko">=</span><span class="ks">&quot;</span><span class="ha ks">transparent</span><span class="ks">&quot;</span></div>
</div>
<div class="row add" style="left:1689.6px;top:783.75px;width:692px;">
<div class="ln"><div class="num">316</div></div>
<div class="a" style="left:131px;top:19px;width:14px;height:2.2px;background:#3a8a58;"></div><div class="a" style="left:136.9px;top:13.1px;width:2.2px;height:14px;background:#3a8a58;"></div>
<div class="cd" style="left:413.2px"><span class="ka">tickStroke</span><span class="ko">=</span><span class="ks">&quot;</span><span class="ha ks">transparent</span><span class="ks">&quot;</span></div>
</div>
<div class="row " style="left:1689.6px;top:819.75px;width:692px;">
<div class="ln"><div class="num">317</div></div>
<div class="cd" style="left:413.2px"><span class="ka">tickLabelProps</span><span class="ko">=</span><span class="kp">{{</span></div>
</div>
<div class="row " style="left:1689.6px;top:855.75px;width:692px;">
<div class="ln"><div class="num">318</div></div>
<div class="cd" style="left:442.0px"><span class="kp">fill: </span><span class="ks">&#x27;hsl(var(--muted-foreground))&#x27;</span></div>
</div>
<div class="row " style="left:1689.6px;top:891.75px;width:692px;">
<div class="ln"><div class="num">319</div></div>
<div class="cd" style="left:442.0px"><span class="kp">fontSize: </span><span class="kn">11</span><span class="kp">,</span></div>
</div>
<div class="row " style="left:1689.6px;top:927.75px;width:692px;">
<div class="ln"><div class="num">320</div></div>
<div class="cd" style="left:442.0px"><span class="kp">textAnchor: </span><span class="ks">&#x27;end&#x27;</span><span class="kp">,</span></div>
</div>
<div class="row " style="left:1689.6px;top:963.75px;width:692px;">
<div class="ln"><div class="num">321</div></div>
<div class="cd" style="left:442.0px"><span class="kp">dy: </span><span class="ks">&#x27;0.33em&#x27;</span><span class="kp">,</span></div>
</div>
<div class="row add" style="left:1689.6px;top:999.75px;width:692px;">
<div class="ln"><div class="num">322</div></div>
<div class="a" style="left:131px;top:19px;width:14px;height:2.2px;background:#3a8a58;"></div><div class="a" style="left:136.9px;top:13.1px;width:2.2px;height:14px;background:#3a8a58;"></div>
<div class="cd" style="left:442.0px"><span class="kp">dx: </span><span class="ko">-</span><span class="ha kn">8</span><span class="kp">,</span></div>
</div>
<div class="row " style="left:1689.6px;top:1035.75px;width:692px;">
<div class="ln"><div class="num">323</div></div>
<div class="cd" style="left:413.2px"><span class="kp">}}</span></div>
</div>
<div class="row " style="left:1689.6px;top:1071.75px;width:692px;">
<div class="ln"><div class="num">324</div></div>
<div class="cd" style="left:413.2px"><span class="ka">tickFormat</span><span class="ko">=</span><span class="kp">{(</span><span class="kv">value</span><span class="kp">) =&gt; formatDate(value)}</span></div>
</div>
<div class="row add" style="left:1689.6px;top:1107.75px;width:692px;">
<div class="ln"><div class="num">325</div></div>
<div class="a" style="left:131px;top:19px;width:14px;height:2.2px;background:#3a8a58;"></div><div class="a" style="left:136.9px;top:13.1px;width:2.2px;height:14px;background:#3a8a58;"></div>
<div class="cd" style="left:413.2px"><span class="ka">numTicks</span><span class="ko">=</span><span class="kp">{</span><span class="kn">5</span><span class="kp">}</span></div>
</div>
<div class="row " style="left:1689.6px;top:1143.75px;width:692px;">
<div class="ln"><div class="num">326</div></div>
<div class="cd" style="left:384.4px"><span class="kp">/&gt;</span></div>
</div>
<div class="row " style="left:1689.6px;top:1179.75px;width:692px;">
<div class="ln"><div class="num">327</div></div>
</div>
<div class="row hatch" style="left:1689.6px;top:1215.75px;width:692px;">
</div>
<div class="row " style="left:1689.6px;top:1251.75px;width:692px;">
<div class="ln"><div class="num">328</div></div>
<div class="cd" style="left:384.4px"><span class="kp">&lt;</span><span class="kt">AxisBottom</span></div>
</div>
<div class="row " style="left:1689.6px;top:1287.75px;width:692px;">
<div class="ln"><div class="num">329</div></div>
<div class="cd" style="left:413.2px"><span class="ka">scale</span><span class="ko">=</span><span class="kp">{dateScale}</span></div>
</div>
<div class="row " style="left:1689.6px;top:1323.75px;width:692px;">
<div class="ln"><div class="num">330</div></div>
<div class="cd" style="left:413.2px"><span class="ka">top</span><span class="ko">=</span><span class="kp">{innerHeight </span><span class="ko">+</span><span class="kp"> margin.top}</span></div>
</div>
<div class="row add" style="left:1689.6px;top:1359.75px;width:692px;">
<div class="ln"><div class="num">331</div></div>
<div class="a" style="left:131px;top:19px;width:14px;height:2.2px;background:#3a8a58;"></div><div class="a" style="left:136.9px;top:13.1px;width:2.2px;height:14px;background:#3a8a58;"></div>
<div class="cd" style="left:413.2px"><span class="ka">stroke</span><span class="ko">=</span><span class="ks">&quot;</span><span class="ha ks">transparent</span><span class="ks">&quot;</span></div>
</div>
<div class="row add" style="left:1689.6px;top:1395.75px;width:692px;">
<div class="ln"><div class="num">332</div></div>
<div class="a" style="left:131px;top:19px;width:14px;height:2.2px;background:#3a8a58;"></div><div class="a" style="left:136.9px;top:13.1px;width:2.2px;height:14px;background:#3a8a58;"></div>
<div class="cd" style="left:413.2px"><span class="ka">tickStroke</span><span class="ko">=</span><span class="ks">&quot;</span><span class="ha ks">transparent</span><span class="ks">&quot;</span></div>
</div>
<div class="row " style="left:1689.6px;top:1431.75px;width:692px;">
<div class="ln"><div class="num">333</div></div>
<div class="cd" style="left:413.2px"><span class="ka">tickLabelProps</span><span class="ko">=</span><span class="kp">{{</span></div>
</div>
<div class="row " style="left:1689.6px;top:1467.75px;width:692px;">
<div class="ln"><div class="num">334</div></div>
<div class="cd" style="left:442.0px"><span class="kp">fill: </span><span class="ks">&#x27;hsl(var(--muted-foreground))&#x27;</span></div>
</div>
<div class="row " style="left:1689.6px;top:1503.75px;width:692px;">
<div class="ln"><div class="num">335</div></div>
<div class="cd" style="left:442.0px"><span class="kp">fontSize: </span><span class="kn">11</span><span class="kp">,</span></div>
</div>
<div class="row " style="left:1689.6px;top:1539.75px;width:692px;">
<div class="ln"><div class="num">336</div></div>
<div class="cd" style="left:442.0px"><span class="kp">textAnchor: </span><span class="ks">&#x27;middle&#x27;</span><span class="kp">,</span></div>
</div>
<div class="row add" style="left:1689.6px;top:1575.75px;width:692px;">
<div class="ln"><div class="num">337</div></div>
<div class="a" style="left:131px;top:19px;width:14px;height:2.2px;background:#3a8a58;"></div><div class="a" style="left:136.9px;top:13.1px;width:2.2px;height:14px;background:#3a8a58;"></div>
<div class="cd" style="left:442.0px"><span class="kp">dy: </span><span class="ha kn">4</span><span class="kp">,</span></div>
</div>
<div class="row " style="left:1689.6px;top:1611.75px;width:692px;">
<div class="ln"><div class="num">338</div></div>
<div class="cd" style="left:413.2px"><span class="kp">}}</span></div>
</div>
<div class="row " style="left:1689.6px;top:1647.75px;width:692px;">
<div class="ln"><div class="num">339</div></div>
<div class="cd" style="left:413.2px"><span class="ka">tickFormat</span><span class="ko">=</span><span class="kp">{(</span><span class="kv">value</span><span class="kp">) =&gt; formatDate(value)}</span></div>
</div>
<div class="row " style="left:1689.6px;top:1683.75px;width:692px;">
<div class="ln"><div class="num">340</div></div>
<div class="cd" style="left:413.2px"><span class="ka">numTicks</span><span class="ko">=</span><span class="kp">{</span><span class="kn">6</span><span class="kp">}</span></div>
</div>
<div class="a" style="left:993px;top:60px;width:1389px;height:82px;background:#ffffff;"></div>
<div class="a" style="left:1009px;top:80px;width:40px;height:40px;background:#3178c6;overflow:hidden;"><div class="a t s" style="left:6.20px;top:10.35px;font-size:27.00px;font-weight:700;color:#fff;letter-spacing:-2.20px;">TS</div></div>
<div class="a t m" style="left:1065px;top:88.22px;font-size:28px;color:#2f2f2f;">…/frontend/src/components/dashboard/MultiLineArea.tsx</div>
<div class="a t s" style="left:2114px;top:86.70px;font-size:28px;color:#2f2f2f;letter-spacing:0.75px;"><span style="color:#58a84b">+77</span> <span style="color:#c9534b">-129</span></div>
<svg class="a" style="left:2270px;top:83px;" width="36" height="34" viewBox="0 0 32 32" fill="none" stroke="#222" stroke-width="2.2" stroke-linecap="round" stroke-linejoin="round"><rect x="2" y="2" width="28" height="28" rx="1"/><rect x="8" y="8" width="16" height="16"/><path d="M2 30L30 2M12 14h8l-8 6h8"/></svg>
<svg class="a" style="left:2339px;top:93px;" width="24" height="16" viewBox="0 0 24 16" fill="none" stroke="#5f5f5f" stroke-width="2" stroke-linecap="round" stroke-linejoin="round"><path d="M2 2l10 10 10-10"/></svg>
<div class="a" style="left:2382px;top:60px;width:608px;height:1636px;background:#f2f2f2;"></div>
<div class="a" style="left:2398px;top:60px;width:2px;height:1636px;background:#d6d6d6;"></div>
<div class="a t s" style="left:2417px;top:78.50px;font-size:30px;color:#2f2f2f;font-weight:700;">Changes</div>
<svg class="a" style="left:2952px;top:86px" width="26" height="14" viewBox="0 0 26 14"><path d="M0 0h26L13 13z" fill="#5f5f5f"/></svg>
<div class="a" style="left:2400px;top:124px;width:590px;height:2px;background:#d6d6d6;"></div>
<div class="a" style="left:2416.5px;top:142.5px;width:506px;height:61px;border:2px solid #d6d6d6;border-radius:8px;box-sizing:border-box;"></div>
<div class="a t s" style="left:2435px;top:159.20px;font-size:28px;color:#7a7a7a;letter-spacing:-0.05px;">Search files...</div>
<svg class="a" style="left:2873px;top:159px;" width="30" height="30" viewBox="0 0 30 30" fill="none" stroke="#5f5f5f" stroke-width="2.6" stroke-linecap="round" stroke-linejoin="round"><path d="M27 3l-9 9M18 5v7h7M3 27l9-9M12 25v-7H5"/></svg>
<svg class="a" style="left:2938px;top:158px;" width="34" height="32" viewBox="0 0 34 32" fill="#333" stroke="#333" stroke-width="2.4" stroke-linecap="round" stroke-linejoin="round"><path d="M14 4l4 3h6l4-3 1 6a8 8 0 0 1 1 5c0 3-2 5-4 6v8h-10v-8c-2-1-4-3-4-6a8 8 0 0 1 1-5zM10 22c-2 1-4 1-6-1" /></svg>
<div class="a" style="left:2416px;top:480.5px;width:566px;height:51px;background:#e4e4e4;border-radius:8px;"></div>
<div class="a" style="left:2440px;top:272px;width:2px;height:468px;background:#d2d2d2;"></div>
<div class="a" style="left:2463.5px;top:324px;width:2px;height:363px;background:#d2d2d2;"></div>
<div class="a" style="left:2487.5px;top:376px;width:2px;height:259px;background:#d2d2d2;"></div>
<div class="a" style="left:2511.5px;top:428px;width:2px;height:103px;background:#d2d2d2;"></div>
<div class="a" style="left:2511.5px;top:583px;width:2px;height:52px;background:#d2d2d2;"></div>
<div class="a" style="left:2535.5px;top:480px;width:2px;height:51px;background:#d2d2d2;"></div>
<svg class="a" style="left:2431px;top:243.0px" width="18" height="10" viewBox="0 0 18 10"><path d="M0 0h18L9 10z" fill="#5f5f5f"/></svg>
<svg class="a" style="left:2463px;top:235.0px" width="30" height="24" viewBox="0 0 30 24"><path d="M0 3a2 2 0 0 1 2-2h9l3 3h14a2 2 0 0 1 2 2v16a2 2 0 0 1-2 2H2a2 2 0 0 1-2-2z" fill="#666"/></svg>
<div class="a t s" style="left:2503.6px;top:232.20px;font-size:28px;color:#5f5f5f;">churnguard</div>
<svg class="a" style="left:2455px;top:295.0px" width="18" height="10" viewBox="0 0 18 10"><path d="M0 0h18L9 10z" fill="#5f5f5f"/></svg>
<svg class="a" style="left:2487px;top:287.0px" width="30" height="24" viewBox="0 0 30 24"><path d="M0 3a2 2 0 0 1 2-2h9l3 3h14a2 2 0 0 1 2 2v16a2 2 0 0 1-2 2H2a2 2 0 0 1-2-2z" fill="#666"/></svg>
<div class="a t s" style="left:2527.6px;top:284.20px;font-size:28px;color:#5f5f5f;">frontend</div>
<svg class="a" style="left:2479px;top:347.0px" width="18" height="10" viewBox="0 0 18 10"><path d="M0 0h18L9 10z" fill="#5f5f5f"/></svg>
<svg class="a" style="left:2511px;top:339.0px" width="30" height="24" viewBox="0 0 30 24"><path d="M0 3a2 2 0 0 1 2-2h9l3 3h14a2 2 0 0 1 2 2v16a2 2 0 0 1-2 2H2a2 2 0 0 1-2-2z" fill="#666"/></svg>
<div class="a t s" style="left:2551.6px;top:336.20px;font-size:28px;color:#5f5f5f;">src</div>
<svg class="a" style="left:2503px;top:399.0px" width="18" height="10" viewBox="0 0 18 10"><path d="M0 0h18L9 10z" fill="#5f5f5f"/></svg>
<svg class="a" style="left:2535px;top:391.0px" width="30" height="24" viewBox="0 0 30 24"><path d="M0 3a2 2 0 0 1 2-2h9l3 3h14a2 2 0 0 1 2 2v16a2 2 0 0 1-2 2H2a2 2 0 0 1-2-2z" fill="#666"/></svg>
<div class="a t s" style="left:2575.6px;top:388.20px;font-size:28px;color:#5f5f5f;">components</div>
<svg class="a" style="left:2527px;top:451.0px" width="18" height="10" viewBox="0 0 18 10"><path d="M0 0h18L9 10z" fill="#5f5f5f"/></svg>
<svg class="a" style="left:2559px;top:443.0px" width="30" height="24" viewBox="0 0 30 24"><path d="M0 3a2 2 0 0 1 2-2h9l3 3h14a2 2 0 0 1 2 2v16a2 2 0 0 1-2 2H2a2 2 0 0 1-2-2z" fill="#666"/></svg>
<div class="a t s" style="left:2599.6px;top:440.20px;font-size:28px;color:#5f5f5f;">dashboard</div>
<div class="a" style="left:2580px;top:492.0px;width:28px;height:28px;background:#3178c6;overflow:hidden;"><div class="a t s" style="left:4.34px;top:7.24px;font-size:18.90px;font-weight:700;color:#fff;letter-spacing:-1.54px;">TS</div></div>
<div class="a t s" style="left:2617.6px;top:492.20px;font-size:28px;color:#2f2f2f;">MultiLineArea.tsx</div>
<div class="a t s" style="left:2860px;top:492.20px;font-size:28px;color:#2f2f2f;"><span style="color:#58a84b">+110</span> <span style="color:#c9534b">-162</span></div>
<svg class="a" style="left:2503px;top:555.0px" width="18" height="10" viewBox="0 0 18 10"><path d="M0 0h18L9 10z" fill="#5f5f5f"/></svg>
<svg class="a" style="left:2535px;top:547.0px" width="30" height="24" viewBox="0 0 30 24"><path d="M0 3a2 2 0 0 1 2-2h9l3 3h14a2 2 0 0 1 2 2v16a2 2 0 0 1-2 2H2a2 2 0 0 1-2-2z" fill="#666"/></svg>
<div class="a t s" style="left:2575.6px;top:544.20px;font-size:28px;color:#5f5f5f;">pages</div>
<div class="a" style="left:2556px;top:596.0px;width:28px;height:28px;background:#3178c6;overflow:hidden;"><div class="a t s" style="left:4.34px;top:7.24px;font-size:18.90px;font-weight:700;color:#fff;letter-spacing:-1.54px;">TS</div></div>
<div class="a t s" style="left:2593.6px;top:596.20px;font-size:28px;color:#5f5f5f;">Dashboard.tsx</div>
<div class="a t s" style="left:2798px;top:596.20px;font-size:28px;color:#2f2f2f;"><span style="color:#58a84b">+131</span> <span style="color:#c9534b">-233</span></div>
<svg class="a" style="left:2508px;top:649.5px" width="29" height="29" viewBox="0 0 29 29"><defs><linearGradient id="jg2508_649" x1="0" y1="0" x2="1" y2="1"><stop offset="0" stop-color="#000"/><stop offset="0.3" stop-color="#333"/><stop offset="0.5" stop-color="#9a9a9a"/><stop offset="0.7" stop-color="#333"/><stop offset="1" stop-color="#000"/></linearGradient><linearGradient id="jg2508_649b" x1="1" y1="0" x2="0" y2="1"><stop offset="0" stop-color="#999"/><stop offset="0.5" stop-color="#222"/><stop offset="1" stop-color="#999"/></linearGradient></defs><circle cx="14.5" cy="14.5" r="14" fill="url(#jg2508_649)"/><ellipse cx="14.2" cy="14.3" rx="8.2" ry="9.6" fill="url(#jg2508_649b)" opacity="0.55"/><ellipse cx="14.2" cy="14.3" rx="4.2" ry="6.6" fill="#f2f2f2" transform="rotate(12 14.2 14.3)"/></svg>
<div class="a t s" style="left:2545.6px;top:648.20px;font-size:28px;color:#5f5f5f;">package-lock.json</div>
<div class="a t s" style="left:2798px;top:648.20px;font-size:28px;color:#2f2f2f;"><span style="color:#58a84b">+61</span> <span style="color:#c9534b">-104</span></div>
<svg class="a" style="left:2484px;top:701.5px" width="29" height="29" viewBox="0 0 29 29"><defs><linearGradient id="jg2484_701" x1="0" y1="0" x2="1" y2="1"><stop offset="0" stop-color="#000"/><stop offset="0.3" stop-color="#333"/><stop offset="0.5" stop-color="#9a9a9a"/><stop offset="0.7" stop-color="#333"/><stop offset="1" stop-color="#000"/></linearGradient><linearGradient id="jg2484_701b" x1="1" y1="0" x2="0" y2="1"><stop offset="0" stop-color="#999"/><stop offset="0.5" stop-color="#222"/><stop offset="1" stop-color="#999"/></linearGradient></defs><circle cx="14.5" cy="14.5" r="14" fill="url(#jg2484_701)"/><ellipse cx="14.2" cy="14.3" rx="8.2" ry="9.6" fill="url(#jg2484_701b)" opacity="0.55"/><ellipse cx="14.2" cy="14.3" rx="4.2" ry="6.6" fill="#f2f2f2" transform="rotate(12 14.2 14.3)"/></svg>
<div class="a t s" style="left:2521.6px;top:700.20px;font-size:28px;color:#58a84b;">package-lock.json</div>
<div class="a t s" style="left:2773px;top:700.20px;font-size:28px;color:#2f2f2f;"><span style="color:#58a84b">+6</span></div>
<div class="a" style="left:2400px;top:756px;width:590px;height:2px;background:#d6d6d6;"></div>
<div class="a t s" style="left:2417px;top:775.10px;font-size:32px;color:#2f2f2f;font-weight:700;">Git</div>
<svg class="a" style="left:2956px;top:785px" width="22" height="12" viewBox="0 0 22 12"><path d="M0 0h22L11 12z" fill="#5f5f5f"/></svg>
<div class="a" style="left:2400px;top:822px;width:590px;height:2px;background:#d6d6d6;"></div>
<div class="a" style="left:2416px;top:840px;width:566px;height:233px;background:#ffffff;border-radius:10px;"></div>
<div class="a t s" style="left:2433px;top:865.50px;font-size:30px;color:#666666;font-weight:700;">churnguard</div>
<div class="a" style="left:2432px;top:921px;width:164px;height:62px;border:2px solid #d6d6d6;border-radius:8px;box-sizing:border-box;background:#f2f2f2;"></div>
<svg class="a" style="left:2452px;top:938px;" width="28" height="28" viewBox="0 0 28 28" fill="none" stroke="#333" stroke-width="2.4" stroke-linecap="round" stroke-linejoin="round"><circle cx="6" cy="5" r="3"/><circle cx="6" cy="23" r="3"/><circle cx="21" cy="5" r="3"/><path d="M6 8v12M21 8c0 8-15 4-15 12"/></svg>
<div class="a t s" style="left:2489px;top:938.40px;font-size:28px;color:#2f2f2f;">main</div>
<svg class="a" style="left:2559px;top:948px;" width="20" height="14" viewBox="0 0 20 14" fill="none" stroke="#5f5f5f" stroke-width="2" stroke-linecap="round" stroke-linejoin="round"><path d="M2 2l8 8 8-8"/></svg>
<svg class="a" style="left:2841px;top:939px;" width="24" height="26" viewBox="0 0 24 26" fill="none" stroke="#58a84b" stroke-width="2.6" stroke-linecap="round" stroke-linejoin="round"><path d="M12 25V3M3 12l9-9 9 9"/></svg>
<div class="a t s" style="left:2869px;top:939.20px;font-size:28px;color:#58a84b;">1</div>
<div class="a" style="left:2920px;top:949.5px;width:6px;height:6px;border-radius:3px;background:#444;"></div>
<div class="a" style="left:2931px;top:949.5px;width:6px;height:6px;border-radius:3px;background:#444;"></div>
<div class="a" style="left:2942px;top:949.5px;width:6px;height:6px;border-radius:3px;background:#444;"></div>
<div class="a" style="left:2432px;top:1000px;width:261px;height:58px;background:#e3e3e3;border-radius:8px;"></div>
<svg class="a" style="left:2450px;top:1016px;" width="28" height="28" viewBox="0 0 26 28" fill="none" stroke="#333" stroke-width="2.2" stroke-linecap="round" stroke-linejoin="round"><circle cx="5" cy="5" r="3" fill="#333"/><circle cx="5" cy="23" r="3"/><circle cx="21" cy="23" r="3" fill="#333"/><path d="M5 8v12M21 20v-9a5 5 0 0 0-5-5h-5M13 2l-3 4 3 4"/></svg>
<div class="a t s" style="left:2487px;top:1015.25px;font-size:27px;color:#2f2f2f;font-weight:700;">Open PR #7</div>
<svg class="a" style="left:2648px;top:1017px;" width="28" height="26" viewBox="0 0 27 27" fill="none" stroke="#333" stroke-width="2.4" stroke-linecap="round" stroke-linejoin="round"><path d="M11 4H3v20h20v-8M15 2h9v9M24 2L12 14"/></svg>
<div class="a" style="left:2416px;top:1090px;width:566px;height:157.5px;background:#ffffff;border-radius:10px;"></div>
<svg class="a" style="left:2436px;top:1116px;" width="28" height="28" viewBox="0 0 28 28" fill="none" stroke="#5f5f5f" stroke-width="2.2" stroke-linecap="round" stroke-linejoin="round"><circle cx="5" cy="5" r="3"/><circle cx="5" cy="23" r="3"/><circle cx="22" cy="5" r="3" fill="#5f5f5f"/><path d="M5 8v12M22 8c0 8-17 4-17 12"/></svg>
<div class="a t s" style="left:2481px;top:1116.80px;font-size:30px;color:#5f5f5f;font-weight:700;">Working Branch</div>
<div class="a" style="left:2433px;top:1171px;width:532px;height:60px;border:2px solid #d6d6d6;border-radius:8px;box-sizing:border-box;background:#f2f2f2;"></div>
<div class="a t s" style="left:2451px;top:1186.90px;font-size:28px;color:#2f2f2f;letter-spacing:0.6px;">vk/4e2a-explore-the-code</div>
<svg class="a" style="left:2916px;top:1186px;" width="30" height="30" viewBox="0 0 30 30" fill="none" stroke="#5f5f5f" stroke-width="2.2" stroke-linecap="round" stroke-linejoin="round"><path d="M3 27h24M3 27v-7L19 4l7 7-16 16M15 8l7 7"/></svg>
<div class="a" style="left:2400px;top:1264px;width:590px;height:2px;background:#d6d6d6;"></div>
<div class="a t s" style="left:2417px;top:1282.95px;font-size:31px;color:#2f2f2f;font-weight:700;">Terminal</div>
<svg class="a" style="left:2916px;top:1286px;" width="26" height="26" viewBox="0 0 26 26" fill="none" stroke="#5f5f5f" stroke-width="2.4" stroke-linecap="round" stroke-linejoin="round"><path d="M15 3h8v8M23 3l-8 8M11 23H3v-8M3 23l8-8"/></svg>
<svg class="a" style="left:2961px;top:1288px" width="14" height="22" viewBox="0 0 14 22"><path d="M0 0l14 11L0 22z" fill="#5f5f5f"/></svg>
<div class="a" style="left:2400px;top:1330px;width:590px;height:2px;background:#d6d6d6;"></div>
<div class="a t s" style="left:2417px;top:1349.55px;font-size:31px;color:#2f2f2f;font-weight:700;">Notes</div>
<svg class="a" style="left:2961px;top:1353px" width="14" height="22" viewBox="0 0 14 22"><path d="M0 0l14 11L0 22z" fill="#5f5f5f"/></svg>
<div class="a" style="left:2400px;top:1396px;width:590px;height:2px;background:#d6d6d6;"></div>
<div class="a" style="left:2393px;top:57.5px;width:591px;height:696px;border:10.5px solid #e8412a;border-radius:26px;box-sizing:border-box;box-shadow:inset 0 3px 5px rgba(0,0,0,0.18), 0 3px 5px rgba(0,0,0,0.15);"></div>
<svg class="a" style="left:2190px;top:30px" width="30" height="40" viewBox="0 0 30 40"><path d="M3 2v28l7-7 5 11 5-2-5-11h10z" fill="#000" stroke="#fff" stroke-width="2.5" stroke-linejoin="round"/></svg>
</body></html>
